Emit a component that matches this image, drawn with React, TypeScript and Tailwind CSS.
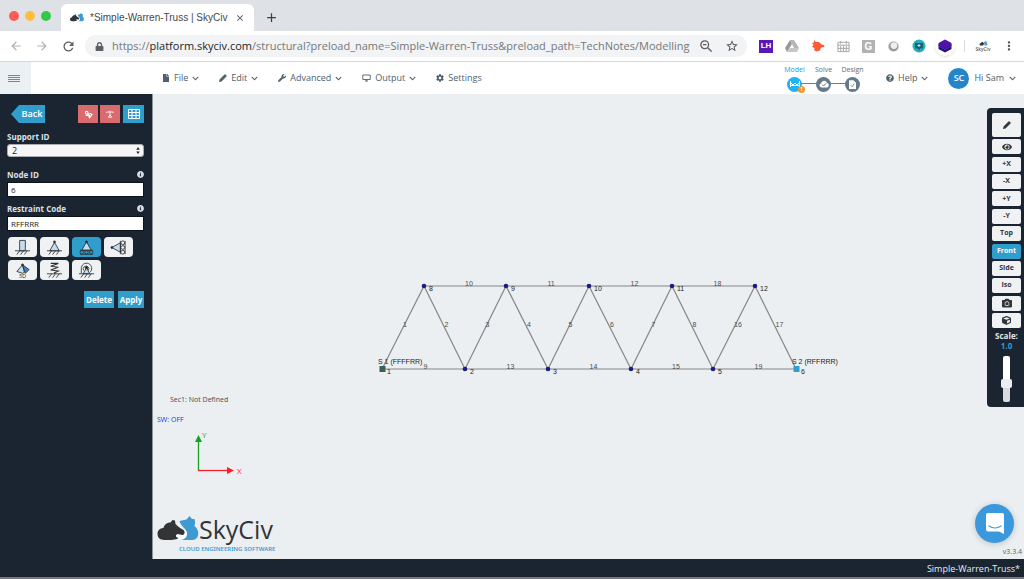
import React from "react";
import {
  FaFile,
  FaWrench,
  FaCog,
  FaChevronDown,
  FaQuestionCircle,
  FaInfoCircle,
  FaLock,
  FaEye,
  FaCamera,
  FaCube,
} from "react-icons/fa";
import { MdArrowBack, MdArrowForward, MdRefresh, MdStarBorder, MdMoreVert, MdClose, MdAdd } from "react-icons/md";

const LogoMark = ({ className }: { className: string }) => (
  <svg viewBox="0 0 41 26" className={className} aria-hidden="true">
    <path
      fill="#3d9bd1"
      d="M22 5l7-1.500L32 0l2.500 3H37c1 3 .5 5 0 7 4 3 4.500 8 3 11-2 3-4 3-7 3H22c5-1 8-4 7-8-1-4-6-6-7-11z"
    />
    <path fill="#fbfcfd" d="M15 24c1-4 4-6 9-6l4-4c4 5 0 10-6 10z" />
    <path
      fill="#333436"
      d="M7 24c-5 0-7-3-7-6 0-4 3-6 6-6 1-4 4-5.500 7-5.500L15 4l2.500.5.5 3.500c2 2 4 4 8 6 2 2 1 5-1 5l-5-1c-3 1-1 4 1 4-2 2-8 2-14 2z"
    />
  </svg>
);

const Pencil = ({ className }: { className: string }) => (
  <svg viewBox="0 0 12 12" className={className} fill="currentColor" aria-hidden="true">
    <path d="M0 12l.8-3.800L7.500 1.500l3 3L3.800 11.200zM8.200.8q.8-.9 1.700 0l1.300 1.300q.9.900 0 1.700l-.6.600-3-3z" />
  </svg>
);

const TabBar = () => (
  <div className="flex h-[31px] items-end bg-[#dee1e6]">
    <div className="flex w-[61px] items-center gap-[6px] self-center pl-[9px]">
      <span className="size-[10px] rounded-full bg-[#fc5b57]" />
      <span className="size-[10px] rounded-full bg-[#fdbd3f]" />
      <span className="size-[10px] rounded-full bg-[#34c84a]" />
    </div>
    <div className="flex h-[27px] w-[193px] items-center rounded-t-md bg-white px-[9px]">
      <LogoMark className="h-[9px] w-[14px] shrink-0" />
      <span className="ml-[6px] flex-1 whitespace-nowrap font-['Liberation_Sans',sans-serif] text-[10px] text-[#45484d]">
        *Simple-Warren-Truss | SkyCiv
      </span>
      <button aria-label="Close tab" className="text-[#4a4d51]">
        <MdClose className="size-[10px]" />
      </button>
    </div>
    <button aria-label="New tab" className="mb-[6px] ml-[10px] text-[#3c4043]">
      <MdAdd className="size-[15px]" />
    </button>
  </div>
);

const Extensions = () => (
  <div className="flex items-center gap-[12px]">
    <span className="flex h-[13px] w-[14px] items-center justify-center bg-[#5a18b4] font-['Liberation_Sans',sans-serif] text-[8px] font-bold text-white">
      LH
    </span>
    <svg viewBox="0 0 14 14" className="size-[14px]">
      <path fill="#b5b5b5" d="M5 1h4l5 8H9z" />
      <path fill="#999" d="M5 1 0 9l2 4 5-8z" />
      <path fill="#c6c6c6" d="M5 9h9l-2 4H2z" />
    </svg>
    <svg viewBox="0 0 14 14" className="size-[14px]">
      <path fill="#ff5b35" d="M3 1l2 2 3 0 2 2 3.500 1.500L13 8l-3 .5-1 3-3.500 1L3 11l.5-2L1 8l1.500-2L1 4l2-.5z" />
    </svg>
    <svg viewBox="0 0 14 14" className="size-[13px]" fill="none" stroke="#a2a2a2">
      <path d="M1 2.500h12v10H1zM1 5.500h12M4 1v3M10 1v3M4 6v6M7 6v6M10 6v6M1 9h12" />
    </svg>
    <span className="flex size-[13px] items-center justify-center bg-[#b2b2b2] font-['Liberation_Sans',sans-serif] text-[10px] font-bold text-white">
      G
    </span>
    <svg viewBox="0 0 14 14" className="size-[13px]">
      <circle cx="7" cy="7" r="5.500" fill="#9b9b9b" />
      <circle cx="7.500" cy="6" r="3.600" fill="#eee" />
    </svg>
    <svg viewBox="0 0 14 14" className="size-[14px]">
      <circle cx="7" cy="7" r="6.500" fill="#27aebd" />
      <path fill="#18616f" d="M3 4h8v5.500H8L7 12 6 9.500H3z" />
      <path stroke="#b9f0f3" d="M7 5v3M5.500 6.500h3" />
    </svg>
    <svg viewBox="0 0 20 20" className="-mx-[3px] size-[20px] rounded-full bg-white shadow">
      <path fill="#27117a" d="m3.500 10 6.500 3.500 6.500-3.500v3L10 16.500 3.500 13z" />
      <path fill="#5113a8" d="m10 3.500 6.500 3.500v3L10 13.500 3.500 10V7z" />
      <path fill="#3d159a" d="M3.500 8.500 10 12l6.500-3.500V10L10 13.500 3.500 10z" />
    </svg>
  </div>
);

const Toolbar = () => (
  <div className="flex h-[31px] items-center border-b border-[#d5d8db] bg-white">
    <nav className="flex w-[85px] items-center gap-[12px] pl-[9px] text-[#b0b2b5]">
      <button aria-label="Back">
        <MdArrowBack className="size-[14px]" />
      </button>
      <button aria-label="Forward">
        <MdArrowForward className="size-[14px]" />
      </button>
      <button aria-label="Reload" className="text-[#5a5d61]">
        <MdRefresh className="size-[15px]" />
      </button>
    </nav>
    <div className="flex h-[22px] min-w-0 flex-1 items-center rounded-full bg-[#f1f3f4] pl-[10px] pr-2">
      <FaLock className="size-[9px] shrink-0 text-[#5c5f63]" />
      <p className="ml-[8px] min-w-0 flex-1 whitespace-nowrap text-[11px] text-[#75787c]">
        https://<span className="text-[#222529]">platform.skyciv.com</span>
        /structural?preload_name=Simple-Warren-Truss&amp;preload_path=TechNotes/Modelling
      </p>
      <svg viewBox="0 0 14 14" className="ml-3 size-[12px] shrink-0" fill="none" stroke="#595c60" strokeWidth="1.500">
        <circle cx="5.500" cy="5.500" r="4.500" />
        <path d="m9 9 4.500 4.500M3.500 5.500h4" />
      </svg>
      <MdStarBorder className="ml-[13px] size-[14px] shrink-0 text-[#55585c]" />
    </div>
    <div className="flex items-center pl-[12px] pr-[8px]">
      <Extensions />
      <span className="ml-[12px] h-3 w-px bg-[#d8dadd]" />
      <span className="ml-[10px] flex w-[16px] flex-col items-center">
        <LogoMark className="h-[5px] w-[9px]" />
        <span className="text-[5px] leading-[6px] text-[#222]">SkyCiv</span>
      </span>
      <button aria-label="Browser menu" className="ml-[11px] text-[#505357]">
        <MdMoreVert className="size-[14px]" />
      </button>
    </div>
  </div>
);

const Monitor = ({ className }: { className: string }) => (
  <svg viewBox="0 0 12 10" className={className} fill="none" stroke="currentColor" strokeWidth="1.200">
    <path d="M1 1h10v6H1zM4 9h4M6 7v2" />
  </svg>
);

const menus = [
  { label: "File", Icon: FaFile, size: "size-[8px]", down: true },
  { label: "Edit", Icon: Pencil, size: "size-[8px]", down: true },
  { label: "Advanced", Icon: FaWrench, size: "size-[8px]", down: true },
  { label: "Output", Icon: Monitor, size: "h-[8px] w-[9px]", down: true },
  { label: "Settings", Icon: FaCog, size: "size-[8px]", down: false },
];

const Steps = () => (
  <div className="flex text-[7px] leading-[10px] text-[#5d6f78]">
    <div className="flex w-[29px] flex-col items-center">
      <span className="text-[#1c9ad6]">Model</span>
      <span className="relative mt-[2px] flex size-[15px] items-center justify-center rounded-full bg-[#1fb2f5]">
        <svg viewBox="0 0 10 6" className="h-[6px] w-[10px]" fill="none" stroke="#fff">
          <path d="M.5 0v6M9.500 0v6M0 4.500h10M1 2l2 2 2-2 2 2 2-2" />
        </svg>
        <span className="absolute -bottom-px left-[11px] z-10 flex size-[7px] items-center justify-center rounded-full bg-[#f5962a] text-[6px] font-bold leading-none text-white">
          !
        </span>
      </span>
    </div>
    <div className="relative flex w-[29px] flex-col items-center">
      <span>Solve</span>
      <span className="mt-[2px] flex size-[15px] items-center justify-center rounded-full bg-[#64798a]">
        <svg viewBox="0 0 10 8" className="h-[8px] w-[10px]">
          <path fill="#fff" d="M2.500 7.500C0 7-.2 4 2 3.500 3 0 7 0 8 3c2.500.5 2.500 4 0 4.500z" />
          <path stroke="#64798a" fill="none" d="m3 4.500 1.500 1.500L7 3.500" />
        </svg>
      </span>
      <span className="absolute -left-[7px] top-[18px] h-px w-[14px] bg-[#6b7f88]" />
      <span className="absolute -right-[7px] top-[18px] h-px w-[14px] bg-[#6b7f88]" />
    </div>
    <div className="flex w-[29px] flex-col items-center">
      <span>Design</span>
      <span className="mt-[2px] flex size-[15px] items-center justify-center rounded-full bg-[#64798a]">
        <svg viewBox="0 0 8 10" className="h-[9px] w-[7px]">
          <path fill="#fff" d="M0 0h5l3 3v7H0z" />
          <path stroke="#64798a" fill="none" d="m2 6 1.500 1.500L6 4" />
        </svg>
      </span>
    </div>
  </div>
);

const AppHeader = () => (
  <header className="flex h-[32px] items-center bg-white text-[9px] text-[#4f626c]">
    <button
      aria-label="Toggle sidebar"
      className="flex h-full w-[31px] flex-col items-center justify-center gap-px bg-[#eaf0f3] pr-[3px]"
    >
      <span className="h-px w-3 bg-[#7b868c]" />
      <span className="h-px w-3 bg-[#7b868c]" />
      <span className="h-px w-3 bg-[#7b868c]" />
      <span className="h-px w-3 bg-[#7b868c]" />
    </button>
    <nav className="ml-[131px] flex flex-1 items-center gap-[20px]">
      {menus.map(({ label, Icon, size, down }) => (
        <button key={label} className="flex items-center gap-[4px]">
          <Icon className={size} />
          <span>{label}</span>
          {down && <FaChevronDown className="size-[7px]" />}
        </button>
      ))}
    </nav>
    <Steps />
    <button className="ml-[19px] flex items-center gap-[4px]">
      <FaQuestionCircle className="size-[8px]" />
      Help
      <FaChevronDown className="size-[7px]" />
    </button>
    <button className="ml-[20px] mr-[8px] flex items-center gap-[5px]">
      <span className="flex size-[21px] items-center justify-center rounded-full bg-[#2585ca] text-[9px] font-semibold text-white">
        SC
      </span>
      <span>Hi Sam</span>
      <FaChevronDown className="size-[7px]" />
    </button>
  </header>
);

const Ground = () => <path d="M2 12.500h16M4 16.500l3-4M8 16.500l3-4M12 16.500l3-4" />;

const restraints = [
  {
    name: "Fixed",
    art: (
      <>
        <path fill="#c3def3" d="M7 1.500h6v11H7z" />
        <Ground />
      </>
    ),
  },
  {
    name: "Pin",
    art: (
      <>
        <path fill="#c3def3" d="m10 3.500-5 9h10z" />
        <circle cx="10" cy="3" r="1" fill="#222" />
        <Ground />
      </>
    ),
  },
  {
    name: "Roller X",
    art: (
      <>
        <path fill="#c3def3" d="m10 3-5 9h10z" />
        <circle cx="10" cy="3" r="1" fill="#222" />
        <circle cx="5" cy="14" r="1.800" />
        <circle cx="10" cy="14" r="1.800" />
        <circle cx="15" cy="14" r="1.800" />
        <path d="M3 11.800h14M3 16.200h14" />
      </>
    ),
  },
  {
    name: "Roller Y",
    art: (
      <>
        <path fill="#c3def3" d="m3 9 9-5v10z" />
        <circle cx="3" cy="9" r="1" fill="#222" />
        <circle cx="14.500" cy="4" r="2" />
        <circle cx="14.500" cy="9" r="2" />
        <circle cx="14.500" cy="14" r="2" />
        <path d="M12 2v14M17 2v14" />
      </>
    ),
  },
  {
    name: "Custom 3D",
    art: (
      <>
        <path fill="#c3def3" d="m10 3-6 7 6 2 2-1z" />
        <path fill="#3c83cf" d="m10 3 7 5-4 4z" />
        <circle cx="10" cy="3" r="1" fill="#222" />
        <text x="10" y="17" textAnchor="middle" fontSize="6" fontWeight="400" stroke="none" fill="#222">
          3D
        </text>
      </>
    ),
  },
  {
    name: "Spring",
    art: (
      <>
        <path strokeWidth="1.200" d="M6 1.500h8L6 4.500l8 1-8 3 8 1-4 2v1" />
        <Ground />
      </>
    ),
  },
  {
    name: "Rotational spring",
    art: (
      <>
        <path d="M4.500 12V7a5.500 5.500 0 1 1 9 4M7 9a3 3 0 1 1 5 0M9 7h2" />
        <path fill="#c3def3" d="m10 6-3.500 6.500h7z" />
        <circle cx="10" cy="6" r="1.200" fill="#222" />
        <Ground />
      </>
    ),
  },
];

const inputClass =
  "block h-[15px] w-full border border-[#0d131a] bg-white px-[3px] text-[8px] leading-[13px] font-normal text-[#222]";

const Sidebar = () => (
  <aside className="w-[153px] shrink-0 border-r border-[#8d949a] bg-[#1b2532] pl-[7px] pr-2 pt-[11px] text-[8px] font-bold text-[#dce0e4]">
    <div className="flex items-center">
      <button className="relative ml-[12px] h-[18px] w-[26px] bg-[#2f9ecd] text-[9px] font-semibold text-white">
        <svg viewBox="0 0 8 18" className="absolute -left-[8px] top-0 h-[18px] w-[8px]">
          <path fill="#2f9ecd" d="M8 0v18L0 9z" />
        </svg>
        Back
      </button>
      <div className="ml-auto flex">
        <button aria-label="Unlink" className="flex h-[18px] w-5 items-center justify-center bg-[#d96a6e]">
          <svg viewBox="0 0 10 10" className="size-[9px]" fill="none" stroke="#fff" strokeWidth="1.200">
            <circle cx="3" cy="3" r="1.500" />
            <path d="m4 4 4 4M2 6h3l1 2.500 3-3.500-2-1z" />
          </svg>
        </button>
        <button aria-label="Split" className="ml-[2px] flex h-[18px] w-5 items-center justify-center bg-[#d96a6e]">
          <svg viewBox="0 0 10 10" className="size-[8px]" fill="none" stroke="#fff" strokeWidth="1.100">
            <path d="M1 3.500V2.500h8v1M5 1v5M3 9l2-3 2 3z" />
          </svg>
        </button>
        <button aria-label="Datasheet" className="ml-[3px] flex h-[18px] w-[21px] items-center justify-center bg-[#2f9ecd]">
          <svg viewBox="0 0 12 10" className="h-[10px] w-[12px]" fill="none" stroke="#fff">
            <path d="M.5.5h11v9H.5zM.5 3.500h11M.5 6.500h11M4 .5v9M8 .5v9" />
          </svg>
        </button>
      </div>
    </div>
    <label htmlFor="support" className="mt-[7px] block leading-[13px]">
      Support ID
    </label>
    <div className="relative mt-px">
      <select
        id="support"
        className="block h-[13px] w-full appearance-none rounded-[3px] border border-[#a9acaf] bg-[#f6f6f6] px-1 text-[9px] font-normal leading-[11px] text-[#222]"
      >
        <option>2</option>
      </select>
      <svg viewBox="0 0 4 8" className="pointer-events-none absolute right-1 top-[3px] h-[7px] w-[4px]">
        <path fill="#222" d="M2 0 4 3H0zM0 5h4L2 8z" />
      </svg>
    </div>
    <div className="mt-[11px] flex items-center justify-between leading-[13px]">
      <label htmlFor="node">Node ID</label>
      <FaInfoCircle className="size-[7px]" />
    </div>
    <input id="node" defaultValue="6" className={inputClass + " mt-px"} />
    <div className="mt-[5px] flex items-center justify-between leading-[13px]">
      <label htmlFor="restraint">Restraint Code</label>
      <FaInfoCircle className="size-[7px]" />
    </div>
    <input id="restraint" defaultValue="RFFRRR" className={inputClass + " mt-px"} />
    <div className="mt-[6px] flex flex-wrap gap-[3px] pl-px">
      {restraints.map(({ name, art }, i) => (
        <button
          key={name}
          aria-label={name}
          className={
            i === 2
              ? "flex h-[20px] w-[29px] items-center justify-center rounded-sm bg-[#2f9ecd]"
              : "flex h-[20px] w-[29px] items-center justify-center rounded-sm bg-[#f0f1f2]"
          }
        >
          <svg
            viewBox="0 0 20 18"
            className="h-[17px] w-[19px]"
            fill="none"
            stroke="#2b2f33"
            strokeWidth="0.900"
          >
            {art}
          </svg>
        </button>
      ))}
    </div>
    <div className="mt-[11px] flex justify-end gap-[4px] text-[8px] text-white">
      <button className="h-[17px] w-[30px] bg-[#2f9ecd]">Delete</button>
      <button className="h-[17px] w-[26px] bg-[#2f9ecd]">Apply</button>
    </div>
  </aside>
);

const nodes = [
  { id: 1, x: 12, y: 99 },
  { id: 2, x: 95, y: 99 },
  { id: 3, x: 178, y: 99 },
  { id: 4, x: 261, y: 99 },
  { id: 5, x: 343, y: 99 },
  { id: 6, x: 426, y: 99 },
  { id: 8, x: 54, y: 16 },
  { id: 9, x: 136, y: 16 },
  { id: 10, x: 219, y: 16 },
  { id: 11, x: 302, y: 16 },
  { id: 12, x: 385, y: 16 },
];

const members: [number, number, number][] = [
  [1, 1, 8],
  [2, 8, 2],
  [3, 2, 9],
  [4, 9, 3],
  [5, 3, 10],
  [6, 10, 4],
  [7, 4, 11],
  [8, 11, 5],
  [9, 1, 2],
  [10, 8, 9],
  [11, 9, 10],
  [12, 10, 11],
  [13, 2, 3],
  [14, 3, 4],
  [15, 4, 5],
  [16, 5, 12],
  [17, 12, 6],
  [18, 11, 12],
  [19, 5, 6],
];

const at = (id: number) => nodes.find((n) => n.id === id)!;

const Truss = () => (
  <svg
    viewBox="0 0 480 115"
    className="absolute left-[217px] top-[176px] h-[115px] w-[480px] font-['Liberation_Sans',sans-serif]"
    fontSize="7"
  >
    {members.map(([id, a, b]) => (
      <line key={id} x1={at(a).x} y1={at(a).y} x2={at(b).x} y2={at(b).y} stroke="#858585" strokeWidth="1.200" />
    ))}
    {members.map(([id, a, b]) => (
      <text key={id} x={(at(a).x + at(b).x) / 2} y={(at(a).y + at(b).y) / 2 - 0.5} fill="#4d4d4d">
        {id}
      </text>
    ))}
    {nodes.map(({ id, x, y }) => (
      <g key={id}>
        {id === 1 || id === 6 ? (
          <rect x={x - 2.5} y={y - 3} width="6" height="6" fill={id === 1 ? "#3a6151" : "#2f9ed0"} />
        ) : (
          <circle cx={x} cy={y} r="2.300" fill="#1b1c85" />
        )}
        <text x={x + 5} y={y + 4.5} fill="#222">
          {id}
        </text>
      </g>
    ))}
    <text x="8" y="94" fill="#222">S 1 (FFFFRR)</text>
    <text x="422" y="94" fill="#222">S 2 (RFFRRR)</text>
  </svg>
);

const views = [
  { name: "Visibility", icon: <FaEye className="size-[10px]" /> },
  { name: "+X" },
  { name: "-X" },
  { name: "+Y" },
  { name: "-Y" },
  { name: "Top" },
  { name: "Front" },
  { name: "Side" },
  { name: "Iso" },
  { name: "Screenshot", icon: <FaCamera className="size-[10px]" /> },
  { name: "Render", icon: <FaCube className="size-[9px]" /> },
];

const ViewPanel = () => (
  <div className="absolute right-0 top-[14px] flex h-[299px] w-[37px] flex-col items-center rounded-l-[4px] bg-[#1b2532] pl-[2px] pt-[5px] text-[7px] font-bold text-[#30363c]">
    <div className="flex h-[215px] w-[29px] flex-col justify-between">
      <button aria-label="Draw" className="flex h-[24px] items-center justify-center rounded-[2px] bg-[#f0f1f2]">
        <Pencil className="size-[8px]" />
      </button>
      {views.map(({ name, icon }) => (
        <button
          key={name}
          aria-label={name}
          className={
            name === "Front"
              ? "flex h-[15px] items-center justify-center rounded-[2px] bg-[#2f9ecd] text-white"
              : "flex h-[15px] items-center justify-center rounded-[2px] bg-[#f0f1f2]"
          }
        >
          {icon ?? name}
        </button>
      ))}
    </div>
    <label htmlFor="scale" className="mt-[3px] flex flex-col items-center text-[8px] font-bold leading-[10px] text-[#e2e5e8]">
      Scale:
      <span className="text-[#2f9ecd]">1.0</span>
    </label>
    <input
      id="scale"
      type="range"
      defaultValue="38"
      className="mt-[5px] h-[46px] w-[11px] appearance-none bg-transparent [direction:rtl] [writing-mode:vertical-lr] [&::-webkit-slider-runnable-track]:w-[7px] [&::-webkit-slider-runnable-track]:rounded-[2px] [&::-webkit-slider-runnable-track]:bg-[linear-gradient(#fff_55%,#d9dbdd_55%)] [&::-webkit-slider-thumb]:-ml-[2px] [&::-webkit-slider-thumb]:h-[9px] [&::-webkit-slider-thumb]:w-[11px] [&::-webkit-slider-thumb]:appearance-none [&::-webkit-slider-thumb]:rounded-[2px] [&::-webkit-slider-thumb]:bg-[#eceeef]"
    />
  </div>
);

const Canvas = () => (
  <main className="relative flex-1 overflow-hidden bg-[#eceff2]">
    <Truss />
    <div className="absolute bottom-[5px] left-[4px] text-[7px] leading-[10px]">
      <p className="ml-[13px] text-[#4a4a4a]">Sec1: Not Defined</p>
      <p className="mt-[10px] text-[#2b2bf0]">SW: OFF</p>
      <svg viewBox="0 0 60 54" className="ml-[33px] mt-[2px] h-[54px] w-[60px]" fontSize="8">
        <path d="M8.500 13v31" stroke="#17a01f" strokeWidth="1.300" />
        <path d="m8.500 8 3.500 7H5z" fill="#17a01f" />
        <path d="M8 43.500h30" stroke="#fa1e2b" strokeWidth="1.300" />
        <path d="m44 43.500-7-3.500v7z" fill="#fa1e2b" />
        <text x="12" y="11" fill="#17a01f">Y</text>
        <text x="47" y="47" fill="#fa1e2b">X</text>
      </svg>
      <div className="mt-[34px] flex items-center">
        <LogoMark className="h-[26px] w-[42px]" />
        <span className="text-[25px] leading-[28px] text-[#333436]">SkyCiv</span>
      </div>
      <p className="ml-[22px] mt-[2px] whitespace-nowrap font-['Noto_Sans',sans-serif] text-[6px] font-semibold leading-[9px] text-[#3d9bd1]">
        CLOUD ENGINEERING SOFTWARE
      </p>
    </div>
    <ViewPanel />
    <div className="absolute bottom-[2px] right-[2px] flex flex-col items-end text-[7px] leading-[10px] text-[#555f66]">
      <button
        aria-label="Open chat"
        className="mb-[4px] mr-[8px] flex size-[39px] items-center justify-center rounded-full bg-[#3a98dc] shadow-[0_1px_6px_rgba(0,0,0,0.2)]"
      >
        <svg viewBox="0 0 18 21" className="h-[21px] w-[18px]">
          <path fill="#fff" d="M2 0h14q2 0 2 2v19l-5-2.500H2q-2 0-2-2V2q0-2 2-2z" />
          <path d="M3 13q6 4 12 0" fill="none" stroke="#3a98dc" strokeWidth="1.200" strokeLinecap="round" />
        </svg>
      </button>
      v3.3.4
    </div>
  </main>
);

export default function App() {
  return (
    <div className="flex min-h-screen flex-col bg-[#1b2532] font-['Open_Sans',sans-serif]">
      <TabBar />
      <Toolbar />
      <AppHeader />
      <div className="flex flex-1">
        <Sidebar />
        <Canvas />
      </div>
      <footer className="flex h-[20px] items-center justify-end border-b-2 border-[#777681] pr-[4px] pt-px text-[9px] text-[#e8ebee]">
        Simple-Warren-Truss*
      </footer>
    </div>
  );
}
